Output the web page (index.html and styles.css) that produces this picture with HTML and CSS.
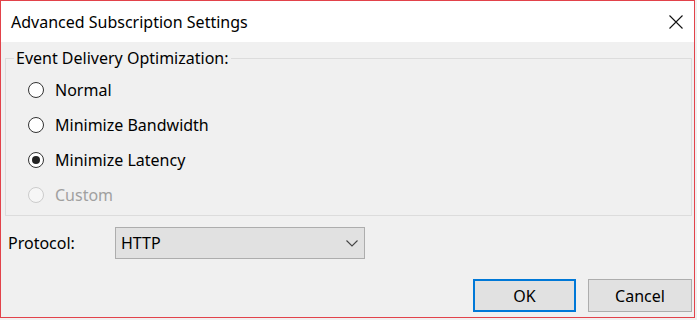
FILE: index.html
```html
<!DOCTYPE html>
<html lang="en">
<head>
    <meta charset="UTF-8">
    <meta name="viewport" content="width=device-width, initial-scale=1.0">
    <title>Advanced Subscription Settings</title>
    <link rel="stylesheet" href="styles.css">
</head>
<body>
    <div class="dialog">
        <!-- Заголовок окна -->
        <div class="title-bar">
            <span class="title-text">Advanced Subscription Settings</span>
            <span class="close-btn">
                <svg width="14" height="14" viewBox="0 0 14 14">
                    <path d="M0.5 0.5 L13.5 13.5 M13.5 0.5 L0.5 13.5" stroke="#111" stroke-width="1.1" fill="none"/>
                </svg>
            </span>
        </div>

        <div class="dialog-body">
            <fieldset class="group-box">
                <legend>Event Delivery Optimization:</legend>

                <label class="radio-row">
                    <input type="radio" name="opt"> Normal
                </label>
                <label class="radio-row">
                    <input type="radio" name="opt"> Minimize Bandwidth
                </label>
                <label class="radio-row">
                    <input type="radio" name="opt" checked> Minimize Latency
                </label>
                <label class="radio-row disabled">
                    <input type="radio" name="opt" disabled> Custom
                </label>
            </fieldset>

            <div class="protocol-row">
                <span class="protocol-label">Protocol:</span>
                <div class="combo">
                    <span>HTTP</span>
                    <svg width="12" height="7" viewBox="0 0 12 7">
                        <path d="M0.5 0.5 L6 6 L11.5 0.5" stroke="#444" stroke-width="1.1" fill="none"/>
                    </svg>
                </div>
            </div>

            <div class="button-row">
                <button class="btn default">OK</button>
                <button class="btn">Cancel</button>
            </div>
        </div>
    </div>
</body>
</html>
```

FILE: styles.css
```css
body {
    margin: 0;
    background: #f0f0f0;
    font-family: "Noto Sans", "Open Sans", sans-serif;
    font-size: 16px;
    color: #000;
}

/* Окно диалога */
.dialog {
    width: 695px;
    height: 318px;
    box-sizing: border-box;
    border: 1px solid #e2424a;
    background: #f0f0f0;
    display: flex;
    flex-direction: column;
}

.title-bar {
    height: 41px;
    background: #ffffff;
    display: flex;
    align-items: center;
    justify-content: space-between;
    padding: 0 11px 0 10px;
    flex-shrink: 0;
}

.title-text {
    line-height: 20px;
}

.close-btn {
    display: flex;
}

.dialog-body {
    flex: 1;
    display: flex;
    flex-direction: column;
    padding: 6px 2px 5px 4px;
}

/* Группа радиокнопок */
.group-box {
    margin: 0;
    border: 1px solid #dcdcdc;
    padding: 4px 8px 3px 8px;
    display: flex;
    flex-direction: column;
}

.group-box legend {
    padding: 0 2px;
    line-height: 20px;
}

.radio-row {
    height: 35px;
    display: flex;
    align-items: center;
    gap: 11px;
    padding-left: 14px;
}

.radio-row.disabled {
    color: #a0a0a0;
}

.radio-row input {
    appearance: none;
    -webkit-appearance: none;
    margin: 0;
    width: 16px;
    height: 16px;
    border: 1px solid #333;
    border-radius: 50%;
    background: #fff;
    display: flex;
    align-items: center;
    justify-content: center;
}

.radio-row input:checked::after {
    content: '';
    width: 8px;
    height: 8px;
    border-radius: 50%;
    background: #222;
}

.radio-row input:disabled {
    border-color: #cccccc;
    background: #f6f6f6;
}

/* Протокол */
.protocol-row {
    display: flex;
    align-items: center;
    margin-top: 11px;
    padding-left: 3px;
}

.protocol-label {
    width: 107px;
}

.combo {
    width: 250px;
    height: 32px;
    box-sizing: border-box;
    border: 1px solid #adadad;
    background: #e1e1e1;
    display: flex;
    align-items: center;
    justify-content: space-between;
    padding: 0 6px 0 5px;
}

/* Кнопки */
.button-row {
    margin-top: auto;
    display: flex;
    justify-content: flex-end;
    gap: 12px;
}

.btn {
    width: 104px;
    height: 33px;
    font-family: inherit;
    font-size: 16px;
    color: #000;
    background: #e1e1e1;
    border: 1px solid #adadad;
    padding: 0;
}

.btn.default {
    width: 103px;
    border: 2px solid #0078d7;
}
```
